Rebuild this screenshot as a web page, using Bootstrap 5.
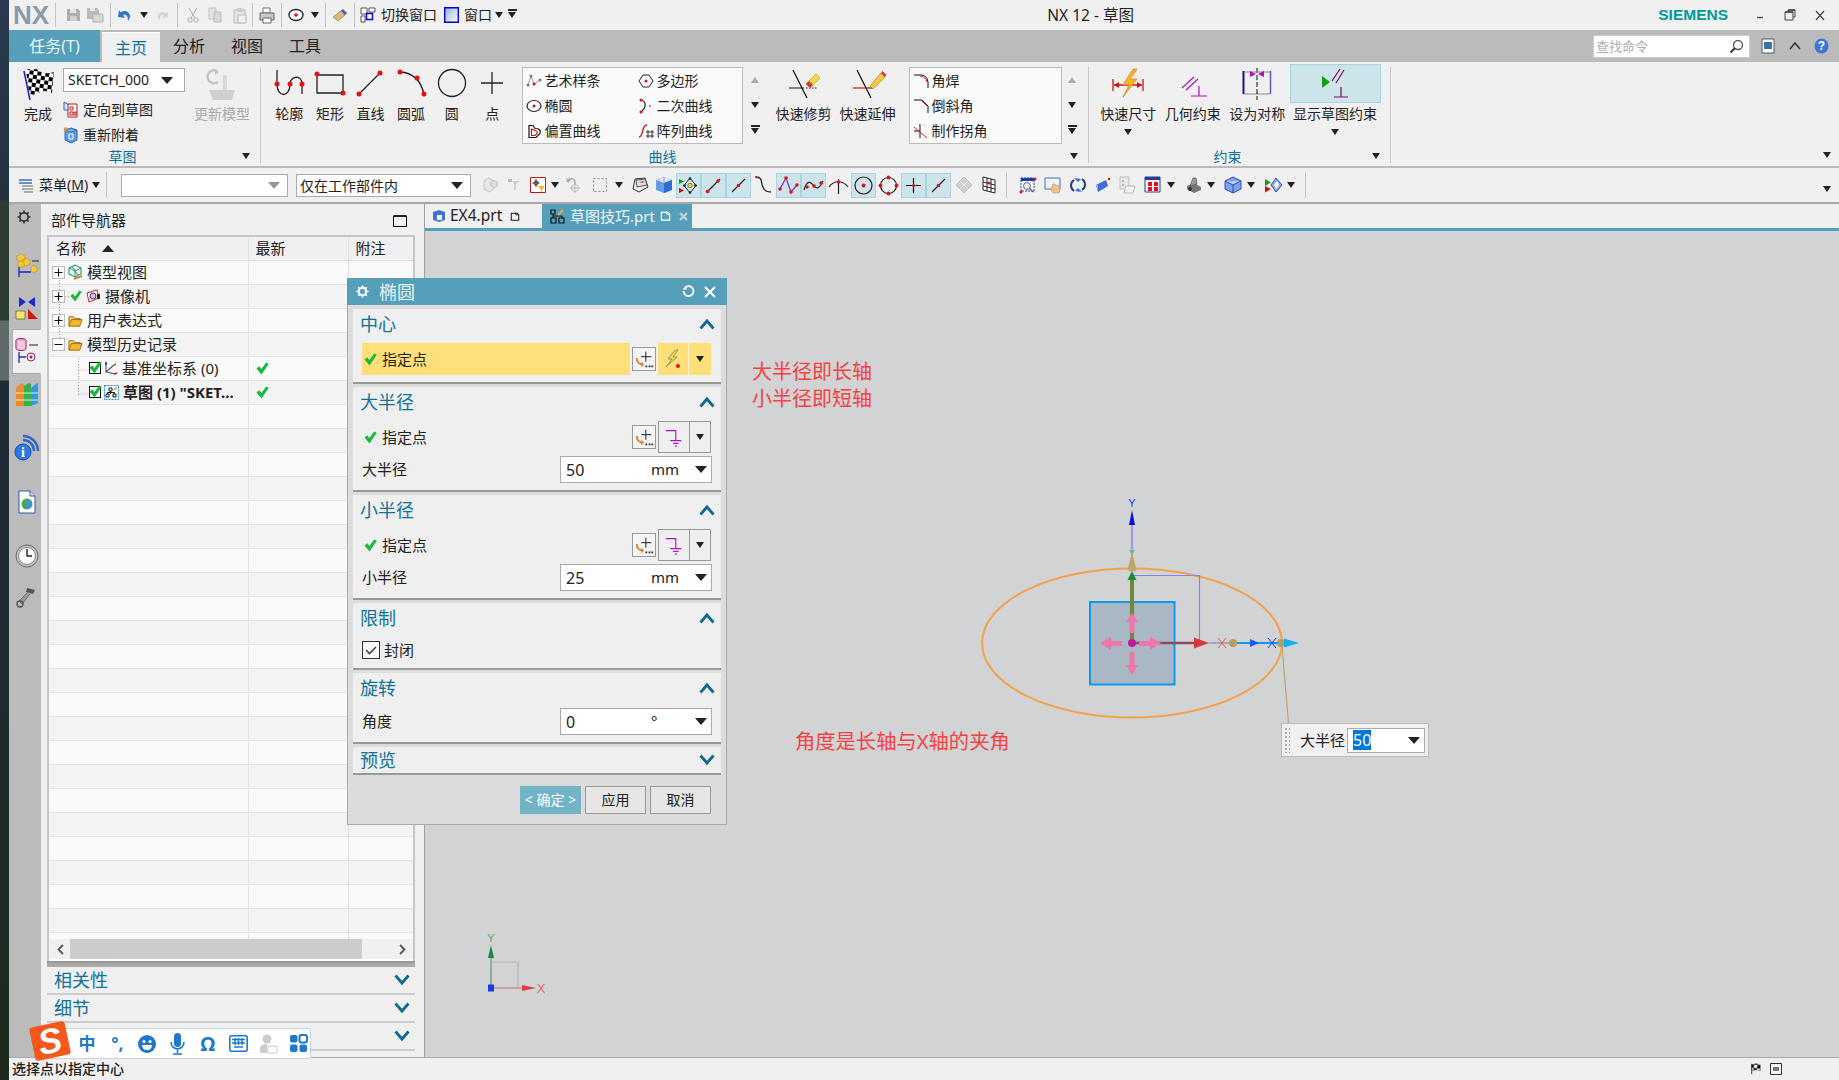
<!DOCTYPE html>
<html lang="zh">
<head>
  <meta charset="UTF-8">
  <title>NX 12 - 草图</title>
  <link href="https://cdn.jsdelivr.net/npm/bootstrap@5.3.0/dist/css/bootstrap.min.css" rel="stylesheet">
  <script src="https://cdn.jsdelivr.net/npm/bootstrap@5.3.0/dist/js/bootstrap.bundle.min.js"></script>
  <style>
    html, body { height: 100%; overflow: hidden; }
    body {
      font-family: "Noto Sans", "Noto Sans CJK SC", sans-serif;
      font-size: 14px; line-height: 1; color: #222;
      background: linear-gradient(#2a3b50 0, #24323f 200px, #2c3d33 201px, #2c3d33 320px, #606a68 321px, #606a68 380px, #1f2b38 381px, #1e2a1e 100%);
    }
    .app { margin-left: 9px; height: 1080px; background: #f0f0f0; }
    svg { display: block; flex: none; overflow: visible; }
    .d { fill: #e3101a; }
    .tri { width: 0; height: 0; border: 4.5px solid transparent; border-top: 6px solid #222; border-bottom: 0; flex: none; }
    .tri.up { border-top: 0; border-bottom: 6px solid #aaa; }
    .tri.lg { border-width: 7px 6px 0; }
    .tri.grey { border-top-color: #999; }
    .tri.bar { position: relative; }
    .tri.bar::before { content: ""; position: absolute; left: -4px; top: -9px; width: 9px; height: 1.5px; background: #222; }
    .m2 { margin-left: 2px; } .m3 { margin-left: 3px; } .m5 { margin-left: 5px; } .m6 { margin-left: 6px; } .m7 { margin-left: 7px; } .m9 { margin-left: 9px; } .m10 { margin-left: 10px; } .m14 { margin-left: 14px; }

    /* title bar */
    .titlebar { height: 30px; }
    .nxlogo { font: bold 26px "Liberation Sans", sans-serif; color: #8b9aa8; width: 36px; margin-left: 4px; }
    .vsep { width: 1px; height: 24px; background: #c4c4c4; flex: none; }
    .q { width: 22px; flex: none; display: flex; justify-content: center; }
    .a { width: 10px; flex: none; display: flex; justify-content: center; }
    .title-t { font-size: 15.5px; padding: 1px 0 0 6px; }
    .siemens { font: bold 15.5px "Liberation Sans", sans-serif; color: #009999; margin-right: 17px; }
    .winbtn { width: 30px; display: flex; justify-content: center; }

    /* tabs */
    .tabbar { height: 32px; background: #bbb; }
    .tabbar .nav-link { padding: 0; border: 0; border-radius: 0; color: #222; font-size: 16px; height: 32px; line-height: 32px; }
    .tabbar .tab-task { width: 91px; background: #559fbb; color: #e8f4f8; text-align: center; margin-right: 2px; }
    .tabbar .tab-home { width: 58px; margin-top: 2px; height: 30px; line-height: 30px; background: #f0f0f0; color: #0f7399; text-align: center; border-top: 1px solid #fff; }
    .tab-o { width: 58px; text-align: center; }
    .search { width: 157px; height: 23px; background: #fff; border: 1px solid #ccc; margin-right: 4px; padding: 0 5px 0 2px; color: #b0b0b0; font-size: 13px; }
    .tabicon { width: 27px; display: flex; justify-content: center; }

    /* ribbon */
    .ribbon { height: 106px; border-bottom: 2px solid #bbb; flex: none; }
    .rgroup { border-right: 1px solid #c8c8c8; margin: 5px 0 3px; }
    .g1 { width: 252px; } .g2 { width: 828px; } .g3 { width: 302px; }
    .rbody { height: 80px; }
    .rfoot { height: 16px; }
    .rlabel { color: #0f7399; text-align: center; line-height: 20px; }
    .launch { width: 24px; display: flex; justify-content: center; align-items: center; padding: 2px 4px 0 0; }
    .rb { display: flex; flex-direction: column; align-items: center; flex: none; }
    .rb-ic { height: 36px; padding-top: 1px; }
    .rb-ic.hl { height: 39px; width: 91px; margin-top: -3px; padding-top: 0; background: #cce4ea; border: 1px solid #a8d4df; display: flex; justify-content: center; align-items: center; }
    .rb-t { height: 22px; line-height: 22px; white-space: nowrap; }
    .rb-caret { height: 9px; }
    .w40 { width: 40.6px; } .w64 { width: 64px; } .w645 { width: 64.5px; } .w91 { width: 91px; }
    .done { width: 36px; margin-left: 11px; }
    .combo { width: 122px; height: 24px; background: #fff; border: 1px solid #aaa; padding: 0 11px 0 4px; }
    .sk-col { margin-left: 7px; width: 122px; padding-top: 1px; }
    .sk-row { height: 25px; gap: 4px; }
    .sk-row.first { margin-top: 5px; }
    .upd { width: 56px; margin-left: 9px; color: #aaa; }
    .gal { background: #fafafa; border: 1px solid #bbb; height: 77px; flex: none; }
    .gal1 { width: 221px; display: grid; grid-template-columns: 112px 1fr; grid-auto-rows: 1fr; }
    .gal2 { width: 153px; display: grid; grid-auto-rows: 1fr; }
    .gi { display: flex; align-items: center; gap: 3px; padding-left: 3px; white-space: nowrap; }
    .scroll { display: flex; flex-direction: column; align-items: center; justify-content: space-around; height: 77px; flex: none; }
    .s24 { width: 24px; } .s20 { width: 20px; }

    /* toolbar */
    .toolbar { height: 36px; border-bottom: 2px solid #a8a8a8; flex: none; }
    .tsep { width: 1px; height: 26px; background: #c4c4c4; flex: none; }
    .tinput { height: 23px; margin-top: 1px; background: #fff; border: 1px solid #aaa; padding: 0 7px 0 3px; flex: none; }
    .ti1 { width: 167px; } .ti2 { width: 175px; }
    .t24 { width: 24px; flex: none; display: flex; justify-content: center; }
    .t25 { width: 25px; flex: none; display: flex; justify-content: center; }
    .t25.on svg { background: #cce4ea; outline: 1px solid #a8d4df; }
    .tdd { width: 40px; flex: none; display: flex; align-items: center; }
    .tdd svg { margin-left: 4px; }
    .tdd .tri { margin-left: 5px; }

    /* main area */
    .main { height: 853px; flex: none; }
    .rail { width: 32px; background: #bbb; flex: none; }
    .rail-i { display: flex; align-items: center; justify-content: center; height: 43px; padding-left: 3px; }
    .rail-i.l { height: 54px; }
    .rail-i.t { height: 40px; }
    .rail-i.ll { height: 56px; margin-top: 5px; }
    .rail-i.s { height: 28px; }
    .rail-i.gear { height: 26px; margin-bottom: 13px; padding-left: 0; padding-right: 2px; }
    .rail-i.act { background: #f0f0f0; margin-left: 3px; padding: 0 0 3px; border: 1px solid #aaa; border-right-color: #f0f0f0; height: 45px; }
    .panel { width: 384px; border-right: 1px solid #a0a0a0; flex: none; padding: 0 9px 6px 6px; }
    .panel-h { height: 31px; padding: 2px 0 0 4px; font-size: 15px; flex: none; }
    .nav-wrap { border: 2px solid #c6c6c6; border-bottom: 0; background: #fff; min-height: 0; position: relative; }
    .nav-scroll { overflow: hidden; min-height: 0; }
    .tree { table-layout: fixed; width: 364px; margin: 0; font-size: 15px; --bs-table-bg: transparent; border-collapse: collapse; }
    .tree .c1 { width: 199px; } .tree .c2 { width: 100px; } .tree .c3 { width: 65px; }
    .tree th, .tree td { padding: 0; height: 24px; border: 0; border-right: 1px solid #e2e2e2; border-bottom: 1px solid #e4e4e4; font-weight: 400; vertical-align: middle; box-shadow: none; color: #222; }
    .tree th { background: #f0f0f0; height: 23px; padding-left: 7px; border-bottom: 1px solid #ddd; }
    .tree tbody tr:nth-child(odd) td { background: #fafafa; }
    .tree tbody tr:nth-child(even) td { background: #f3f3f3; }
    .tn { display: flex; align-items: center; height: 23px; gap: 4px; white-space: nowrap; overflow: hidden; }
    .l0 { padding-left: 4px; } .l1 { padding-left: 40px; gap: 3px; }
    .l1 span:last-child { margin-left: 1px; }
    .col2 { padding-left: 7px; display: flex; align-items: center; height: 23px; }
    .pm { width: 11px; height: 11px; background: #fafafa; outline: 1px solid #bbb; flex: none; }
    .cb { width: 12px; height: 12px; background: #fff; border: 1px solid #111; flex: none; position: relative; }
    .cb svg { position: absolute; left: -1px; top: -2px; }
    .tree-dots { position: absolute; left: 0; top: 0; pointer-events: none; }
    .hscroll { height: 22px; background: #f0f0f0; border-bottom: 2px solid #fff; flex: none; }
    .hs-arrow { width: 22px; display: flex; justify-content: center; align-items: center; }
    .hs-thumb { width: 292px; margin-left: -1px; background: #ccc; height: 20px; }
    .sash { height: 6px; background: #aaa; border-top: 2px solid #999; flex: none; }
    .acc { height: 28px; border-bottom: 2px solid #ccc; padding: 0 5px 0 7px; font-size: 18px; color: #0f7399; flex: none; }

    /* viewport */
    .viewport { min-width: 0; }
    .vtabs { height: 27px; border-bottom: 3px solid #559fbb; padding-left: 3px; flex: none; font-size: 15px; white-space: nowrap; }
    .vtab { height: 24px; display: flex; align-items: center; flex: none; }
    .vtab-b { width: 111px; gap: 4px; padding-left: 4px; font-size: 15.5px; }
    .vtab-a { width: 150px; margin-left: 3px; padding-left: 8px; gap: 5px; background: #559fbb; color: #f0f8fb; }
    .canvas { background: #d2d3d5; min-height: 0; }
    .note { position: absolute; color: #f44242; font-size: 20px; white-space: nowrap; line-height: 1; }
    .note-a { left: 743px; top: 158px; }
    .note-b { left: 743px; top: 185px; }
    .note-c { left: 786px; top: 527px; font-size: 20.3px; }
    .dimbox { position: absolute; left: 1272px; top: 519px; width: 148px; height: 34px; background: #f0f0f0; border: 1px solid #bbb; }
    .grip { width: 6px; height: 26px; margin-left: 2px; background-image: radial-gradient(#aaa 1.2px, transparent 1.3px); background-size: 4px 4px; }
    .dim-l { margin-left: 10px; font-size: 15px; }
    .dim-in { width: 78px; height: 25px; margin-left: 2px; background: #fff; border: 1px solid #aaa; padding: 0 4px 0 5px; font-size: 16px; }
    .dim-in b { background: #0078d7; color: #fff; font-weight: 400; padding: 2px 0; }

    /* dialog */
    .dlg { position: absolute; left: 338px; top: 74px; width: 380px; height: 547px; background: #dcdcdc; border: 1px solid #aaa; border-top: 0; }
    .dlg-h { height: 27px; background: #559fbb; color: #e6f3f7; font-size: 18px; padding: 0 11px 0 9px; margin: 0 -1px 4px; flex: none; }
    .sec { background: #efefef; border-bottom: 2px solid #999; margin: 0 5px 3px; flex: none; }
    .sec-h { height: 32px; padding: 0 6px 3px 7px; color: #0f7399; font-size: 18px; }
    .fs1 { height: 75px; } .fs2 { height: 105px; } .fs4 { height: 67px; } .fs5 { height: 71px; } .fs6 { height: 28px; }
    .row-pick { height: 32px; margin-top: 2px; padding: 0 10px 0 9px; font-size: 15px; }
    .pick-l { width: 269px; height: 32px; padding-left: 2px; gap: 5px; margin-right: 2px; }
    .pick-y { background: #ffdf79; }
    .mini { width: 24px; height: 24px; background: #f4f4f4; border: 1px solid #999; padding: 0; border-radius: 0; flex: none; }
    .split { width: 53px; height: 32px; margin-left: 2px; border: 1px solid #999; flex: none; }
    .split.y { border: 0; background: #ffdf79; }
    .split span { display: flex; align-items: center; justify-content: center; }
    .split .s1 { width: 31px; border-right: 1px solid #999; }
    .split.y .s1 { border-right: 1px solid #fff5cf; }
    .split .s2 { flex: 1; }
    .row-val { height: 27px; padding: 0 9px; font-size: 15px; margin-top: 3px; }
    .val { width: 152px; height: 27px; background: #fff; border: 1px solid #aaa; padding: 0 4px 0 5px; }
    .val .form-control { border: 0; padding: 0; border-radius: 0; font-size: 16px; color: #222; background: transparent; box-shadow: none; min-width: 0; line-height: 1; }
    .val .u { width: 28px; margin-right: 16px; flex: none; font-size: 15px; }
    .chk { height: 30px; padding: 0 9px; gap: 4px; font-size: 15px; }
    .chk-box { width: 18px; height: 18px; background: #f8f8f8; border: 1px solid #333; flex: none; }
    .dlg-f { padding: 8px 15px 0 0; gap: 4px; }
    .dlg-f .btn { width: 61px; height: 28px; padding: 0; border-radius: 0; font-size: 14px; line-height: 1; color: #222; background: #e6e6e6; border: 1px solid #999; }
    .dlg-f .btn-ok { background: #73b3c8; border-color: #73b3c8; color: #fff; }

    /* status */
    .status { height: 23px; border-top: 1px solid #aaa; padding: 0 57px 0 3px; font-weight: 500; flex: none; }

    /* input method bar */
    .ime { position: absolute; left: 44px; top: 1028px; width: 267px; height: 31px; background: #fff; border: 1px solid #c4d4e4; border-radius: 2px; color: #1f78c8; }
    .ime-s { position: absolute; left: 32px; top: 1024px; width: 36px; height: 34px; background: #f4581c; border-radius: 3px; transform: rotate(-12deg); color: #fff; font: italic bold 35px/34px "Liberation Sans", sans-serif; text-align: center; }
    .ime-i { width: 30.2px; display: flex; justify-content: center; align-items: center; font-size: 17px; font-weight: 700; flex: none; }
    .ime-sp { width: 27px; flex: none; }
  </style>
</head>
<body class="position-relative">

<svg width="0" height="0" class="position-absolute">
  <defs>
    <pattern id="chk" width="8" height="8" patternUnits="userSpaceOnUse" patternTransform="rotate(8) translate(1 1)">
      <rect width="8" height="8" fill="#fff"/><rect width="4" height="4"/><rect x="4" y="4" width="4" height="4"/>
    </pattern>
    <linearGradient id="wg" x1="0" y1="0" x2="1" y2="1"><stop offset="0" stop-color="#8fb4dc"/><stop offset="1" stop-color="#fff"/></linearGradient>
    <symbol id="ok" viewBox="0 0 14 14"><path d="M.5 7 3.500 4.500 5.800 7.500 11 .5 13.800 2 6 13.500z" fill="#1cb83c"/></symbol>
    <symbol id="chev-up" viewBox="0 0 16 12"><path d="M1.500 10.500 8 3l6.500 7.500" fill="none" stroke="#0d6b8e" stroke-width="2.800"/></symbol>
    <symbol id="chev-dn" viewBox="0 0 16 12"><path d="M1.500 1.500 8 9l6.500-7.500" fill="none" stroke="#0d6b8e" stroke-width="2.800"/></symbol>
    <symbol id="plus" viewBox="0 0 11 11"><path d="M1.500 5.500h8M5.500 1.500v8" stroke="#111" fill="none"/></symbol>
    <symbol id="minus" viewBox="0 0 11 11"><path d="M1.500 5.500h8" stroke="#111" fill="none"/></symbol>
    <symbol id="pt" viewBox="0 0 24 24"><path d="M14 4v11M9 9.500h11" stroke="#111"/><path d="M4 11c0 5 2 7 7 7" fill="none" stroke="#e57a22" stroke-width="2"/><path d="M9 15l3 3-3 3z" fill="#e57a22"/><path d="M13.500 19h2v2h-2zM17 19h2v2h-2zM20 19h2v2h-2z" fill="#333"/></symbol>
    <symbol id="gnd" viewBox="0 0 22 22"><path d="M2 4h11v11M7 15h12M10 18h6M12 21h2" fill="none" stroke="#b010c0" stroke-width="1.200"/></symbol>
    <symbol id="folder" viewBox="0 0 16 16"><path d="M1 14V4h5l1 2h6v2" fill="#f6d26a" stroke="#a06a10"/><path d="M1 14l2.500-7H15l-2.500 7z" fill="#f4b92c" stroke="#a06a10"/></symbol>
    <symbol id="linedot" viewBox="0 0 23 23"><path d="M5 18 18 5" stroke="#222" stroke-width="1.200"/><circle cx="5.500" cy="17.500" r="1.800" class="d"/><circle cx="16" cy="7" r="1.800" class="d"/></symbol>
    <symbol id="linemid" viewBox="0 0 23 23"><path d="M5 18 18 5" stroke="#222" stroke-width="1.200"/><circle cx="11.500" cy="11.500" r="1.800" class="d"/></symbol>
    <symbol id="pin" viewBox="0 0 12 12"><path d="M1.500 2h7l2 2v6.500h-9z" fill="none" stroke="currentColor" stroke-width="1.300"/><path d="M7 1v3h3" fill="none" stroke="currentColor"/></symbol>
  </defs>
</svg>

<div class="app d-flex flex-column">

  <!-- title bar -->
  <div class="titlebar d-flex align-items-center">
    <span class="nxlogo">NX</span>
    <span class="vsep m6"></span>
    <span class="q m6"><svg width="16" height="16" viewBox="0 0 16 16"><path d="M2 2h11l2 2v10H2z" fill="#aeaeae"/><path d="M5 2h6v4H5z" fill="#e4e4e4"/><path d="M5 9h7v5H5z" fill="#d0d0d0"/></svg></span>
    <span class="q"><svg width="18" height="16" viewBox="0 0 18 16"><path d="M1 1h10l2 2v9H1z" fill="#bbb"/><path d="M4 1h5v3H4z" fill="#e8e8e8"/><path d="M7 7h9l1 1v7H7z" fill="#d8d8d8" stroke="#b0b0b0"/></svg></span>
    <span class="vsep ms-1"></span>
    <span class="q m2"><svg width="16" height="16" viewBox="0 0 16 16"><path d="M3 8c1-5 10-6 11 1 0 2-1 3-2 5 0-4-1-7-5-6L9 11 2 10l1-7 2 3" fill="#2f78c8"/></svg></span>
    <span class="a ms-1"><span class="tri"></span></span>
    <span class="q m3"><svg width="14" height="15" viewBox="0 0 16 16"><path d="M13 8C12 3 3 2 2 9c0 2 1 3 2 5 0-4 1-7 5-6L7 11l7-1-1-7-2 3" fill="#d4d4d4"/></svg></span>
    <span class="vsep m3"></span>
    <span class="q ms-1"><svg width="14" height="16" viewBox="0 0 14 16"><path d="M11 1 5 11M3 1l6 10" stroke="#b0b0b0" fill="none"/><circle cx="4" cy="13" r="2.200" fill="none" stroke="#b0b0b0"/><circle cx="10" cy="13" r="2.200" fill="none" stroke="#b0b0b0"/></svg></span>
    <span class="q"><svg width="14" height="16" viewBox="0 0 14 16"><path d="M1 1h7v11H1z" fill="#e4e4e4" stroke="#c0c0c0"/><path d="M6 5h7v10H6z" fill="#d8d8d8" stroke="#bbb"/></svg></span>
    <span class="q m2"><svg width="15" height="17" viewBox="0 0 15 17"><path d="M2 3h11v13H2z" fill="#e4e4e4" stroke="#bbb"/><path d="M5 1h5v4H5z" fill="#ccc"/><path d="M6 8h8v8H6z" fill="#f0f0f0" stroke="#bbb"/></svg></span>
    <span class="vsep m2"></span>
    <span class="q m3"><svg width="16" height="17" viewBox="0 0 16 17"><path d="M4 1h7v5H4z" fill="#fff" stroke="#777"/><path d="M1 6h14v7H1z" fill="#c8c8c8" stroke="#666"/><path d="M4 11h8v5H4z" fill="#fff" stroke="#666"/></svg></span>
    <span class="vsep m3"></span>
    <span class="q m3"><svg width="16" height="16" viewBox="0 0 16 16"><ellipse cx="8" cy="8" rx="7" ry="5.500" fill="#fff" stroke="#222" stroke-width="1.300"/><circle cx="8" cy="8" r="1.800" class="d"/></svg></span>
    <span class="a m3"><span class="tri"></span></span>
    <span class="vsep m5"></span>
    <span class="q m3"><svg width="16" height="14" viewBox="0 0 16 14"><path d="M1 9 10 2l4 4-8 7z" fill="#d9b77a" stroke="#8a7048" stroke-width=".6"/><path d="M11 1l4 4-2 2-4-4z" fill="#3c62b8"/></svg></span>
    <span class="vsep m3"></span>
    <span class="q m2"><svg width="16" height="16" viewBox="0 0 16 16"><path d="M1 1h6v6H1zM9 1h6v4H9zM1 9h4v6H1z" fill="#fff" stroke="#555"/><path d="M6.500 6.500h6v6h-6z" fill="#fff" stroke="#00c" stroke-width="1.400"/></svg></span>
    <span class="m2">切换窗口</span>
    <span class="q m3"><svg width="15" height="16" viewBox="0 0 15 16"><path d="M.7.700h13.600v14.600H.7z" fill="url(#wg)" stroke="#00c" stroke-width="1.400"/></svg></span>
    <span class="m2">窗口</span>
    <span class="a m2"><span class="tri"></span></span>
    <span class="a m3"><span class="tri bar"></span></span>
    <span class="flex-fill text-center title-t">NX 12 - 草图</span>
    <span class="siemens">SIEMENS</span>
    <span class="winbtn"><svg width="8" height="8" viewBox="0 0 8 8"><path d="M1 6.500h6" stroke="#444" stroke-width="1.400"/></svg></span>
    <span class="winbtn"><svg width="12" height="12" viewBox="0 0 12 12"><path d="M4 3V1h7v7H9M1 3h8v8H1z" fill="none" stroke="#444"/><path d="M1 3h8M4 1h7" stroke="#444" stroke-width="1.500"/></svg></span>
    <span class="winbtn me-1"><svg width="10" height="11" viewBox="0 0 10 11"><path d="m1 1 8 9M9 1l-8 9" stroke="#444" stroke-width="1.200"/></svg></span>
  </div>

  <!-- tabs -->
  <ul class="nav tabbar align-items-start flex-nowrap">
    <li class="nav-item"><a class="nav-link tab-task" href="#">任务(T)</a></li>
    <li class="nav-item"><a class="nav-link tab-home" href="#">主页</a></li>
    <li class="nav-item"><a class="nav-link tab-o" href="#">分析</a></li>
    <li class="nav-item"><a class="nav-link tab-o" href="#">视图</a></li>
    <li class="nav-item"><a class="nav-link tab-o" href="#">工具</a></li>
    <li class="nav-item ms-auto d-flex align-items-center h-100">
      <div class="search d-flex align-items-center justify-content-between">
        <span>查找命令</span>
        <svg width="15" height="15" viewBox="0 0 15 15"><circle cx="9" cy="6" r="4.500" fill="#fff" stroke="#555" stroke-width="1.300"/><path d="M6 9 1.500 13.500" stroke="#333" stroke-width="2"/></svg>
      </div>
      <span class="tabicon"><svg width="14" height="16" viewBox="0 0 14 16"><path d="M1 1h12v14H1z" fill="#fff" stroke="#555"/><path d="M3 4h8v7H3z" fill="#3f6fa8"/></svg></span>
      <span class="tabicon"><svg width="12" height="10" viewBox="0 0 12 10"><path d="M1 8 6 2l5 6" fill="none" stroke="#333" stroke-width="1.500"/></svg></span>
      <span class="tabicon me-1"><svg width="15" height="16" viewBox="0 0 15 16"><ellipse cx="7.500" cy="8" rx="7" ry="7.500" fill="#3f74d6"/><text x="7.500" y="12" text-anchor="middle" font-family="Liberation Sans" font-weight="700" font-size="12" fill="#fff">?</text></svg></span>
    </li>
  </ul>

  <!-- ribbon -->
  <div class="ribbon d-flex">
    <div class="rgroup g1 d-flex flex-column">
      <div class="rbody d-flex">
        <div class="rb done">
          <div class="rb-ic"><svg width="34" height="34" viewBox="0 0 34 34"><path d="M5 2 Q13 -1 19 3 T33 4 L31 25 Q24 21 17 25 T8 24 Z" fill="url(#chk)"/><path d="M3 3 9 32" stroke="#1c1cc8" stroke-width="1.500"/></svg></div>
          <div class="rb-t">完成</div>
        </div>
        <div class="sk-col">
          <div class="combo d-flex align-items-center justify-content-between"><span>SKETCH_000</span><span class="tri lg"></span></div>
          <div class="sk-row first d-flex align-items-center">
            <svg width="16" height="17" viewBox="0 0 16 17"><path d="M1 1 6 4v5H1z" fill="#dfe6f8" stroke="#3c5cc0"/><path d="M5 3h9v13H5z" fill="#fff" stroke="#a02020"/><path d="M7 6h3v3H7zM7 11h3v3H7zM11 11h2v3h-2z" fill="none" stroke="#c01818"/></svg>
            <span>定向到草图</span>
          </div>
          <div class="sk-row d-flex align-items-center">
            <svg width="16" height="17" viewBox="0 0 16 17"><path d="M2 4 8 2l6 2v10l-6 3-6-3z" fill="#5a9ade" stroke="#2f6cb0"/><path d="M2 4l6 2 6-2" fill="#a8ccf0" stroke="#2f6cb0"/><path d="M6 8h4v5H6z" fill="none" stroke="#fff"/><circle cx="2.500" cy="3" r="1.800" fill="#e8922c"/></svg>
            <span>重新附着</span>
          </div>
        </div>
        <div class="rb upd">
          <div class="rb-ic"><svg width="32" height="34" viewBox="0 0 32 34"><path d="M11 3a6.500 6.500 0 1 0 1 11" fill="none" stroke="#c4c4c4" stroke-width="2.500"/><path d="M9 1l4 3-4 3z" fill="#c4c4c4"/><path d="M14 7h7v15h-7z" fill="#d8d8d8"/><path d="M3 22h26l-3 10H7z" fill="#d0d0d0"/><path d="M14 7h3v15h-3z" fill="#eee"/></svg></div>
          <div class="rb-t">更新模型</div>
        </div>
      </div>
      <div class="rfoot d-flex"><div class="rlabel flex-fill">草图</div><div class="launch"><span class="tri"></span></div></div>
    </div>

    <div class="rgroup g2 d-flex flex-column">
      <div class="rbody d-flex ps-2">
        <div class="rb w40"><div class="rb-ic"><svg width="40" height="34" viewBox="0 0 40 34"><path d="M8 2v14c0 14 13 14 13 0 0-8 12-10 12 0v10" fill="none" stroke="#222" stroke-width="1.300"/><circle cx="8" cy="16" r="2.500" class="d"/><circle cx="21" cy="16" r="2.500" class="d"/><circle cx="33" cy="16" r="2.500" class="d"/></svg></div><div class="rb-t">轮廓</div></div>
        <div class="rb w40"><div class="rb-ic"><svg width="40" height="34" viewBox="0 0 40 34"><path d="M7 7h26v18H7z" fill="none" stroke="#222" stroke-width="1.300"/><circle cx="7" cy="6" r="2.500" class="d"/><circle cx="33" cy="25" r="2.500" class="d"/></svg></div><div class="rb-t">矩形</div></div>
        <div class="rb w40"><div class="rb-ic"><svg width="40" height="34" viewBox="0 0 40 34"><path d="M9 26 30 5" stroke="#222" stroke-width="1.300"/><circle cx="9" cy="26" r="2.500" class="d"/><circle cx="30" cy="5" r="2.500" class="d"/></svg></div><div class="rb-t">直线</div></div>
        <div class="rb w40"><div class="rb-ic"><svg width="40" height="34" viewBox="0 0 40 34"><path d="M9 4Q28 5 33 26" fill="none" stroke="#222" stroke-width="1.300"/><circle cx="9" cy="4" r="2.500" class="d"/><circle cx="26" cy="10" r="2.500" class="d"/><circle cx="33" cy="26" r="2.500" class="d"/></svg></div><div class="rb-t">圆弧</div></div>
        <div class="rb w40"><div class="rb-ic"><svg width="40" height="34" viewBox="0 0 40 34"><circle cx="20" cy="15" r="13.500" fill="none" stroke="#222" stroke-width="1.300"/></svg></div><div class="rb-t">圆</div></div>
        <div class="rb w40"><div class="rb-ic"><svg width="40" height="34" viewBox="0 0 40 34"><path d="M9 15h22M20 4v22" stroke="#222" stroke-width="1.300"/></svg></div><div class="rb-t">点</div></div>
        <div class="gal gal1 m9">
          <div class="gi"><svg width="16" height="16" viewBox="0 0 16 16"><path d="M2 12 5 3l3 8 6-4" fill="none" stroke="#999"/><circle cx="2" cy="12" r="1.500" fill="#777"/><circle cx="5" cy="3" r="1.500" fill="#777"/><circle cx="8" cy="11" r="1.500" class="d"/><circle cx="14" cy="7" r="1.500" fill="#777"/></svg>艺术样条</div>
          <div class="gi"><svg width="16" height="16" viewBox="0 0 16 16"><path d="M5 2h6l4 6-4 6H5L1 8z" fill="#fff" stroke="#222"/><circle cx="8" cy="8" r="1.500" class="d"/></svg>多边形</div>
          <div class="gi"><svg width="16" height="16" viewBox="0 0 16 16"><ellipse cx="8" cy="8" rx="7" ry="5.500" fill="#fff" stroke="#222" stroke-width="1.200"/><circle cx="8" cy="8" r="1.500" class="d"/></svg>椭圆</div>
          <div class="gi"><svg width="16" height="16" viewBox="0 0 16 16"><path d="M3 2C8 3 9 9 3 14" fill="none" stroke="#222" stroke-width="1.200"/><circle cx="3" cy="2" r="1.500" class="d"/><circle cx="3" cy="14" r="1.500" class="d"/><circle cx="12" cy="8" r="1" fill="#777"/></svg>二次曲线</div>
          <div class="gi"><svg width="16" height="16" viewBox="0 0 16 16"><path d="M3 2.500h4l2 3c4 0 6 1 5 5l-4 4H3z" fill="#fff" stroke="#111" stroke-width="1.200"/><path d="M5.500 6c2 0 3 2 5 2 1 0 1 2 0 3l-1.500 1.500H5.500z" fill="none" stroke="#d01010" stroke-width="1.200"/></svg>偏置曲线</div>
          <div class="gi"><svg width="16" height="16" viewBox="0 0 16 16"><path d="M1 14c5 0 2-12 8-12" fill="none" stroke="#d01010" stroke-width="1.300"/><path d="M9 8h2v2H9zM13 8h2v2h-2zM9 12h2v2H9zM13 12h2v2h-2z" fill="none" stroke="#333"/></svg>阵列曲线</div>
        </div>
        <div class="scroll s24"><span class="tri up"></span><span class="tri"></span><span class="tri bar"></span></div>
        <div class="rb w64 m5"><div class="rb-ic"><svg width="64" height="34" viewBox="0 0 64 34"><path d="M21 2 35 30M17 20h15" stroke="#111" stroke-width="1.200"/><path d="M34 20h12" stroke="#111" stroke-dasharray="1.500 1.500"/><path d="M34 16 44 6l4 4-10 10z" fill="#f5d73e" stroke="#b89020" stroke-width=".6"/><path d="M34 16l4 4 3-3-4-4z" fill="#d23a2a"/></svg></div><div class="rb-t">快速修剪</div></div>
        <div class="rb w64"><div class="rb-ic"><svg width="64" height="34" viewBox="0 0 64 34"><path d="M21 2 35 30" stroke="#111" stroke-width="1.200"/><path d="M17 20h14" stroke="#d01010" stroke-width="1.200"/><path d="M31 20h5" stroke="#111"/><path d="M34 18 45 5l4 4-12 12z" fill="#f5c83e" stroke="#a87818" stroke-width=".6"/><path d="M45 5l4 4 1.500-2-4-4z" fill="#d23a2a"/></svg></div><div class="rb-t">快速延伸</div></div>
        <div class="gal gal2 m9">
          <div class="gi"><svg width="16" height="16" viewBox="0 0 16 16"><path d="M1 2h7q6 0 7 7v6" fill="none" stroke="#111"/><path d="M7 3q6 1 7 6" fill="none" stroke="#e02020"/></svg>角焊</div>
          <div class="gi"><svg width="16" height="16" viewBox="0 0 16 16"><path d="M1 2h8l6 6v7" fill="none" stroke="#111"/><path d="M8 2l6 6" stroke="#e02020"/></svg>倒斜角</div>
          <div class="gi"><svg width="16" height="16" viewBox="0 0 16 16"><path d="M7 1v14M1 8h6" stroke="#111"/><path d="M1 4l13 11" stroke="#e02020"/><path d="M7 2h5M12 8h2" stroke="#bbb" stroke-dasharray="1 1"/></svg>制作拐角</div>
        </div>
        <div class="scroll s20"><span class="tri up"></span><span class="tri"></span><span class="tri bar"></span></div>
      </div>
      <div class="rfoot d-flex"><div class="rlabel flex-fill">曲线</div><div class="launch"><span class="tri"></span></div></div>
    </div>

    <div class="rgroup g3 d-flex flex-column">
      <div class="rbody d-flex m7">
        <div class="rb w645"><div class="rb-ic"><svg width="64" height="34" viewBox="0 0 64 34"><path d="M17 11v12M47 11v12M18 17h28" stroke="#d01010" stroke-width="1.300" fill="none"/><path d="M18 17l5-3v6zM46 17l-5-3v6z" fill="#d01010"/><path d="M37 1 27 17h6l-6 12 14-18h-7l7-10z" fill="#f5b62a" stroke="#e07818" stroke-width=".7"/></svg></div><div class="rb-t">快速尺寸</div><div class="rb-caret"><span class="tri d-block mt-1"></span></div></div>
        <div class="rb w645"><div class="rb-ic"><svg width="64" height="34" viewBox="0 0 64 34"><path d="M21 20 33 9M25 22 37 11M30 28h16M38 18v10" stroke="#b010c0" stroke-width="1.200" fill="none"/></svg></div><div class="rb-t">几何约束</div></div>
        <div class="rb w645"><div class="rb-ic"><svg width="64" height="34" viewBox="0 0 64 34"><path d="M18.500 3v23" stroke="#14148a" stroke-width="2"/><path d="M45.500 3v23" stroke="#5a5ab0" stroke-width="1.500"/><path d="M19 26h26" stroke="#888"/><path d="M32 0v32" stroke="#111" stroke-dasharray="5 2"/><path d="M19 4h26" stroke="#888"/><path d="M31 6l-6-3v6zM33 6l6-3v6z" fill="#b010c0"/></svg></div><div class="rb-t">设为对称</div></div>
        <div class="rb w91"><div class="rb-ic hl"><svg width="40" height="34" viewBox="0 0 40 34"><path d="M7 9l8 6-8 6z" fill="#12a012"/><path d="M17 14 25 2M21 16 29 3M19 30h14M26 20v10" stroke="#7a0a5a" stroke-width="1.200" fill="none"/></svg></div><div class="rb-t">显示草图约束</div><div class="rb-caret"><span class="tri d-block mt-1"></span></div></div>
      </div>
      <div class="rfoot d-flex"><div class="rlabel flex-fill">约束</div><div class="launch"><span class="tri"></span></div></div>
    </div>
    <div class="flex-fill d-flex align-items-end justify-content-end pe-2 pb-2"><span class="tri"></span></div>
  </div>

  <!-- selection toolbar -->
  <div class="toolbar d-flex align-items-center">
    <span class="q m6"><svg width="16" height="16" viewBox="0 0 16 16"><path d="M1 3h13M1 6h13" stroke="#3f6fb0" stroke-width="1.400"/><path d="M4 9h11M4 12h11M6 15h9" stroke="#666"/></svg></span>
    <span class="m2">菜单(<u>M</u>)</span>
    <span class="a m3"><span class="tri"></span></span>
    <span class="tsep m5"></span>
    <div class="tinput ti1 m14 d-flex align-items-center justify-content-end"><span class="tri lg grey"></span></div>
    <div class="tinput ti2 ms-2 d-flex align-items-center justify-content-between"><span>仅在工作部件内</span><span class="tri lg"></span></div>
    <span class="t24 m7"><svg width="18" height="18" viewBox="0 0 18 18"><path d="M3 5l5-3 5 3v8l-5 3-5-3z" fill="#e6e6e6" stroke="#c4c4c4"/><circle cx="13" cy="8" r="3.500" fill="#ddd" stroke="#c4c4c4"/></svg></span>
    <span class="t24"><svg width="18" height="18" viewBox="0 0 18 18"><path d="M2 5h5l2 3v6h2V8l4-3z" fill="#d0d0d0"/><path d="M3 3h4v3H3z" fill="#bbb"/></svg></span>
    <span class="t24"><svg width="16" height="16" viewBox="0 0 16 16"><path d="M.5.500h15v15H.5z" fill="#fff" stroke="#c01818"/><path d="M6 2v8M2.500 6h7" stroke="#333"/><circle cx="6" cy="6" r="2" fill="none" stroke="#333"/><path d="M8 9h7l-3 4v2h-1v-2z" fill="#f5b62a"/></svg></span>
    <span class="a"><span class="tri"></span></span>
    <span class="t24 m2"><svg width="18" height="18" viewBox="0 0 18 18"><path d="M2 6c2-5 8-4 8 0v3" fill="none" stroke="#aaa" stroke-width="1.500"/><path d="M1 2l2 5 3-3z" fill="#aaa"/><circle cx="10" cy="12" r="3.500" fill="none" stroke="#bbb"/><path d="M10 7v10M5 12h10" stroke="#bbb"/></svg></span>
    <span class="t24 m2"><svg width="18" height="18" viewBox="0 0 18 18"><path d="M2.500 2.500h13v13h-13z" fill="none" stroke="#888" stroke-dasharray="2 2"/></svg></span>
    <span class="a m2"><span class="tri"></span></span>
    <span class="t24 ms-1"><svg width="18" height="16" viewBox="0 0 18 16"><path d="M4 2 14 1l3 9-9 5-6-3z" fill="#f0f0f0" stroke="#333"/><path d="M5 3l9-1 2 6-10 2z" fill="#dcdcdc" stroke="#555"/><path d="M8 5l5-1-1 2z" fill="#d04040"/></svg></span>
    <span class="t24"><svg width="18" height="18" viewBox="0 0 18 18"><path d="M1 4l8-3 8 3v10l-8 3-8-3z" fill="#5aa0ec"/><path d="M1 4l8 3 8-3-8-3z" fill="#d6e8fa"/><path d="M9 7v10l8-3V4z" fill="#2f6cd6"/><path d="M4 3v8M9 1v7" stroke="#e05050" stroke-width=".6"/></svg></span>
    <span class="t25 on"><svg width="23" height="23" viewBox="0 0 23 23"><path d="M2 5l5 2.500L2 10z" fill="#12a012"/><path d="M2 14l5 2.500L2 19z" fill="#d01010"/><path d="M13 4l6 7.500-6 7.500-6-7.500z" fill="none" stroke="#222"/><circle cx="13" cy="11.500" r="2.200" fill="#f5d73e" stroke="#222" stroke-width=".5"/><circle cx="13" cy="4.500" r="1.300" fill="#222"/><circle cx="13" cy="18.500" r="1.300" fill="#222"/><circle cx="7.500" cy="11.500" r="1.300" fill="#222"/><circle cx="18.500" cy="11.500" r="1.300" fill="#222"/></svg></span>
    <span class="t25 on"><svg width="23" height="23"><use href="#linedot"/></svg></span>
    <span class="t25 on"><svg width="23" height="23"><use href="#linemid"/></svg></span>
    <span class="t25"><svg width="23" height="23" viewBox="0 0 23 23"><path d="M4 3c8 0 4 8 8 12 2 3 5 3 7 3" fill="none" stroke="#222" stroke-width="1.300"/><circle cx="4" cy="3" r="1" class="d"/></svg></span>
    <span class="t25 on"><svg width="23" height="23" viewBox="0 0 23 23"><path d="M3 15 9 4l5 14 6-7" fill="none" stroke="#7a30c8" stroke-width="1.200"/><circle cx="3" cy="15" r="1.800" class="d"/><circle cx="9" cy="4" r="1.800" class="d"/><circle cx="14" cy="18" r="1.800" class="d"/><circle cx="20" cy="11" r="1.800" class="d"/></svg></span>
    <span class="t25 on"><svg width="23" height="23" viewBox="0 0 23 23"><path d="M2 16C5 5 9 8 12 12s7 1 9-5" fill="none" stroke="#222" stroke-width="1.200"/><circle cx="5" cy="13" r="1.800" class="d"/><circle cx="12" cy="12" r="1.800" class="d"/><circle cx="19" cy="9" r="1.800" class="d"/></svg></span>
    <span class="t25"><svg width="23" height="23" viewBox="0 0 23 23"><path d="M2 13c5-7 14-7 19 0M11.500 5v15" fill="none" stroke="#222" stroke-width="1.200"/><circle cx="11.500" cy="8" r="1.800" class="d"/></svg></span>
    <span class="t25 on"><svg width="23" height="23" viewBox="0 0 23 23"><circle cx="11.500" cy="11.500" r="8.500" fill="none" stroke="#222" stroke-width="1.200"/><circle cx="11.500" cy="11.500" r="2" class="d"/></svg></span>
    <span class="t25"><svg width="23" height="23" viewBox="0 0 23 23"><circle cx="11.500" cy="11.500" r="8" fill="none" stroke="#222" stroke-width="1.200"/><circle cx="11.500" cy="3.500" r="1.900" class="d"/><circle cx="11.500" cy="19.500" r="1.900" class="d"/><circle cx="3.500" cy="11.500" r="1.900" class="d"/><circle cx="19.500" cy="11.500" r="1.900" class="d"/></svg></span>
    <span class="t25 on"><svg width="23" height="23" viewBox="0 0 23 23"><path d="M4 11.500h15M11.500 4v15" stroke="#111" stroke-width="1.200"/><circle cx="11.500" cy="11.500" r="1.500" class="d"/></svg></span>
    <span class="t25 on"><svg width="23" height="23"><use href="#linemid"/></svg></span>
    <span class="t25"><svg width="20" height="20" viewBox="0 0 20 20"><path d="M10 2l8 8-8 8-8-8z" fill="#d0d0d0" stroke="#bbb"/><path d="M6 6l8 8M14 6l-8 8" stroke="#eee"/></svg></span>
    <span class="t25"><svg width="16" height="18" viewBox="0 0 16 18"><path d="M2 1l12 3v13L2 14z" fill="#fff" stroke="#222"/><path d="M6 2v13M10 3v13M2 6l12 3M2 10l12 3" stroke="#222"/><circle cx="8" cy="7" r="1.500" class="d"/></svg></span>
    <span class="tsep m5"></span>
    <span class="t25 ms-2"><svg width="18" height="18" viewBox="0 0 18 18"><path d="M2 2h13v13H2z" fill="#fff" stroke="#1a3ab0" stroke-dasharray="2 1"/><path d="M2 2h13v3H2z" fill="#1a3ab0"/><circle cx="8" cy="10" r="3.500" fill="#e8f0fa" stroke="#666"/><path d="M10.500 12.500l4 3.500" stroke="#666" stroke-width="1.500"/><circle cx="2" cy="16" r="1.500" class="d"/><circle cx="16" cy="3" r="1.500" class="d"/></svg></span>
    <span class="t25"><svg width="18" height="18" viewBox="0 0 18 18"><path d="M1 2h15v11H1z" fill="#eef3fb" stroke="#4a6ab0"/><path d="M9 8h2l1 1 3 1 1 3-1 4H9L6 12h2z" fill="#eec28a" stroke="#b98850" stroke-width=".5"/></svg></span>
    <span class="t25"><svg width="18" height="18" viewBox="0 0 18 18"><path d="M5 4c-4 3-4 8 0 11" fill="none" stroke="#2a3a80" stroke-width="2"/><path d="M13 14c4-3 4-8 0-11" fill="none" stroke="#2a3a80" stroke-width="2"/><path d="M5 2l7 1-3 3zM13 16l-7-1 3-3z" fill="#2f6cd6"/></svg></span>
    <span class="t25"><svg width="18" height="18" viewBox="0 0 18 18"><path d="M2 9l10-5 2 6-10 6z" fill="#3f6fd6"/><path d="M2 9l2 7V9z" fill="#8ab0ec"/><circle cx="15" cy="3" r="1.300" class="d"/></svg></span>
    <span class="t25"><svg width="18" height="18" viewBox="0 0 18 18"><path d="M1 1h9v12H1z" fill="#e8e8e8" stroke="#c0c0c0"/><path d="M3 4h2v2H3zM3 8h2v2H3z" fill="#bbb"/><path d="M7 10h9l-2 7H5z" fill="#f0f0f0" stroke="#bbb"/></svg></span>
    <span class="tdd"><svg width="18" height="18" viewBox="0 0 18 18"><path d="M1 1h15v15H1z" fill="#f2f5fb" stroke="#2a3a90"/><path d="M1 1h15v3H1z" fill="#2a3a90"/><path d="M4 6h4v4H4zM10 6h4v4h-4zM4 11h4v4H4zM10 11h4v4h-4z" class="d"/></svg><span class="tri"></span></span>
    <span class="tdd"><svg width="18" height="18" viewBox="0 0 18 18"><path d="M3 10l7-3 7 4v3l-7 3-7-4z" fill="#777"/><path d="M6 10 9 2h3l1 6z" fill="#9a9a9a" stroke="#444" stroke-width=".6"/><circle cx="6" cy="13" r="2" fill="#333"/></svg><span class="tri"></span></span>
    <span class="tdd"><svg width="18" height="18" viewBox="0 0 18 18"><path d="M1 5l8-4 8 4v8l-8 4-8-4z" fill="#7ea2ee" stroke="#2f4fb0"/><path d="M1 5l8 4 8-4" fill="#b4ccf6" stroke="#2f4fb0"/><path d="M9 9v8" stroke="#2f4fb0"/></svg><span class="tri"></span></span>
    <span class="tdd"><svg width="18" height="18" viewBox="0 0 18 18"><path d="M1 3l6 3.500L1 10z" fill="#12a012"/><path d="M1 10l6 3-6 3.500z" fill="#d01010"/><path d="M12 2l6 7-6 7-5-7z" fill="#8eaee8" stroke="#2f4fb0"/><path d="M10 9l3-4 2 4-3 4z" fill="#fff"/></svg><span class="tri"></span></span>
    <span class="tsep m5"></span>
    <span class="tri ms-auto me-2 mt-2"></span>
  </div>

  <!-- main -->
  <div class="main d-flex position-relative">
    <div class="rail d-flex flex-column">
      <div class="rail-i gear"><svg width="14" height="14" viewBox="0 0 14 14"><circle cx="7" cy="7" r="4.200" fill="none" stroke="#333" stroke-width="1.800"/><path d="M7 .5v2M7 11.500v2M.5 7h2M11.500 7h2M2.400 2.400l1.400 1.400M10.200 10.200l1.400 1.400M11.600 2.400l-1.400 1.400M3.800 10.200l-1.400 1.400" stroke="#333" stroke-width="1.600"/></svg></div>
      <div class="rail-i"><svg width="24" height="24" viewBox="0 0 24 24"><path d="M2 3l4-2 4 2v4l-4 2-4-2zM7 7l4-2 4 2v4l-4 2-4-2z" fill="#f3c940" stroke="#c08a14" stroke-width=".6"/><path d="M3 9l3-1 3 1v5H3z" fill="#f3c940" stroke="#c08a14" stroke-width=".6"/><path d="M16 14l3-2 3 2v4l-3 2-3-2z" fill="#f3c940" stroke="#c08a14" stroke-width=".6"/><path d="M4 14v10M4 19h12" stroke="#1a2ab8" stroke-width="1.300"/><path d="M17 8h7" stroke="#222"/></svg></div>
      <div class="rail-i"><svg width="24" height="24" viewBox="0 0 24 24"><path d="M4 1l7 5-7 5zM20 1l-7 5 7 5z" fill="#1a2ad0"/><path d="M1 15h9v8H1z" fill="#f6e860" stroke="#555" stroke-width=".7"/><path d="M13 23V13l10 10z" fill="#d01818"/></svg></div>
      <div class="rail-i act"><svg width="24" height="26" viewBox="0 0 24 26"><ellipse cx="6" cy="3.500" rx="5" ry="2" fill="#e6a2c8" stroke="#a0186a"/><path d="M1 3.500v8c0 1 2 2 5 2s5-1 5-2v-8" fill="#f2c8de" stroke="#a0186a"/><path d="M4 15v11M4 20h7" stroke="#1a2ab8" stroke-width="1.300"/><circle cx="16" cy="20" r="4" fill="none" stroke="#a0186a"/><circle cx="16" cy="20" r="1.500" fill="#a0186a"/><path d="M14 8h9" stroke="#222"/></svg></div>
      <div class="rail-i t"><svg width="24" height="24" viewBox="0 0 24 24"><path d="M1 6l5-5 3 1v22H1z" fill="#ee8a2a"/><path d="M9 4l5-3 2 1v22H9z" fill="#37b24a"/><path d="M16 6l6-5 1 1v19l-7 3z" fill="#2f9ade"/><path d="M1 11h8M1 18h8M9 11h7M9 18h7M16 11h7M16 18h7" stroke="#fff" stroke-width=".8"/></svg></div>
      <div class="rail-i ll"><svg width="25" height="25" viewBox="0 0 25 25"><path d="M9 1a15 15 0 0 1 15 15M9 5a11 11 0 0 1 11 11" fill="none" stroke="#2f64c8" stroke-width="2.400"/><circle cx="9" cy="17" r="8" fill="#2f78e0" stroke="#1a4aa8"/><text x="9" y="22" text-anchor="middle" font-family="Liberation Serif" font-weight="700" font-size="14" fill="#fff">i</text></svg></div>
      <div class="rail-i l"><svg width="20" height="24" viewBox="0 0 20 24"><path d="M2 1h11l5 5v17H2z" fill="#fff" stroke="#2a5ab0"/><path d="M13 1v5h5" fill="#d8e4f8" stroke="#2a5ab0"/><circle cx="10" cy="14" r="5.500" fill="#3fae4a"/><path d="M6 11c3 0 4 3 2 6l3 2c3-2 4-5 2-8z" fill="#4a90e0"/></svg></div>
      <div class="rail-i l"><svg width="24" height="24" viewBox="0 0 24 24"><circle cx="12" cy="12" r="11" fill="#c8c8c8" stroke="#666"/><circle cx="12" cy="12" r="8.500" fill="#f6f8fc" stroke="#888"/><path d="M12 5v7h5" fill="none" stroke="#222" stroke-width="1.400"/></svg></div>
      <div class="rail-i s"><svg width="22" height="22" viewBox="0 0 22 22"><path d="M11 2l8 2-2 4-7-2z" fill="#555"/><path d="M12 6 3 15l3 3 8-10" fill="#9a9a9a" stroke="#444" stroke-width=".6"/><circle cx="4" cy="18" r="3" fill="none" stroke="#555" stroke-width="1.400"/></svg></div>
    </div>

    <div class="panel d-flex flex-column">
      <div class="panel-h d-flex align-items-center justify-content-between">
        <span>部件导航器</span>
        <svg class="me-2" width="14" height="12" viewBox="0 0 14 12"><path d="M.5 1h13v10.500H.5z" fill="none" stroke="#111"/><path d="M.5 1h13" stroke="#111" stroke-width="1.600"/></svg>
      </div>
      <div class="nav-wrap flex-fill d-flex flex-column">
        <div class="nav-scroll flex-fill">
          <table class="table tree">
            <colgroup><col class="c1"><col class="c2"><col class="c3"></colgroup>
            <thead>
              <tr><th><span class="d-flex align-items-center">名称<svg class="ms-3" width="12" height="7" viewBox="0 0 12 7"><path d="M6 0l6 7H0z" fill="#222"/></svg></span></th><th>最新</th><th>附注</th></tr>
            </thead>
            <tbody id="rows">
              <tr><td><div class="tn l0"><span class="pm"><svg width="11" height="11"><use href="#plus"/></svg></span><svg width="15" height="16" viewBox="0 0 15 16"><path d="M7 1l6 3v6l-6 3-6-3V4z" fill="none" stroke="#1a9a5a" stroke-width="1.100"/><path d="M1 4l6 3 6-3M7 7v6M4 2.500 10 11" stroke="#1a9a5a" fill="none"/><path d="M6 15l8-3" stroke="#e25a20" stroke-width="1.500"/></svg><span>模型视图</span></div></td><td></td><td></td></tr>
              <tr><td><div class="tn l0"><span class="pm"><svg width="11" height="11"><use href="#plus"/></svg></span><svg class="m2" width="12" height="12"><use href="#ok"/></svg><svg width="15" height="14" viewBox="0 0 15 14"><path d="M1 4l10-3 2 8L3 13z" fill="#fff" stroke="#d01818"/><circle cx="7" cy="7" r="3" fill="#e8c0c0" stroke="#1a2ab8"/><path d="M11 5h3v5h-3z" fill="#222"/></svg><span>摄像机</span></div></td><td></td><td></td></tr>
              <tr><td><div class="tn l0"><span class="pm"><svg width="11" height="11"><use href="#plus"/></svg></span><svg width="15" height="15"><use href="#folder"/></svg><span>用户表达式</span></div></td><td></td><td></td></tr>
              <tr><td><div class="tn l0"><span class="pm"><svg width="11" height="11"><use href="#minus"/></svg></span><svg width="15" height="15"><use href="#folder"/></svg><span>模型历史记录</span></div></td><td></td><td></td></tr>
              <tr><td><div class="tn l1"><span class="cb"><svg width="13" height="13"><use href="#ok"/></svg></span><svg width="14" height="14" viewBox="0 0 14 14"><path d="M2 1v10l10 2M2 11l8-7" fill="none" stroke="#555" stroke-width="1.100"/><path d="M2 1v3" stroke="#1a2ab8" stroke-width="1.500"/><path d="M10 13l3-1" stroke="#d01818" stroke-width="1.500"/><path d="M10 4l2-1" stroke="#1a9a5a" stroke-width="1.500"/></svg><span>基准坐标系 (0)</span></div></td><td><div class="col2"><svg width="13" height="13"><use href="#ok"/></svg></div></td><td></td></tr>
              <tr><td><div class="tn l1"><span class="cb"><svg width="13" height="13"><use href="#ok"/></svg></span><svg width="15" height="15" viewBox="0 0 15 15"><path d="M.5.500h14v14H.5z" fill="#fff" stroke="#1a8ae8" stroke-dasharray="2 1"/><path d="M5 3h3v3H5zM2 9h3v3H2zM9 9h3v3H9z" fill="#fff" stroke="#111"/><path d="M6.500 6v3M3.500 9V7.500h7V9" stroke="#111" fill="none"/><path d="M10 5l3-3" stroke="#e0a020" stroke-width="1.500"/></svg><span class="fw-bold">草图 (1) "SKET...</span></div></td><td><div class="col2"><svg width="13" height="13"><use href="#ok"/></svg></div></td><td></td></tr>
            </tbody>
          </table>
        </div>
        <svg class="tree-dots" width="200" height="200" viewBox="48 236 200 200"><path d="M58.500 279v60M77.500 357v37M77.500 369H88M77.500 393H88M64 296h5" fill="none" stroke="#999" stroke-dasharray="1 2"/></svg>
        <div class="hscroll d-flex">
          <span class="hs-arrow"><svg width="7" height="11" viewBox="0 0 7 11"><path d="M6 1 1.500 5.500 6 10" fill="none" stroke="#555" stroke-width="1.800"/></svg></span>
          <span class="hs-thumb"></span>
          <span class="hs-arrow ms-auto"><svg width="7" height="11" viewBox="0 0 7 11"><path d="M1 1l4.500 4.500L1 10" fill="none" stroke="#555" stroke-width="1.800"/></svg></span>
        </div>
      </div>
      <div class="sash"></div>
      <div class="acc d-flex align-items-center justify-content-between"><span>相关性</span><svg width="16" height="12"><use href="#chev-dn"/></svg></div>
      <div class="acc d-flex align-items-center justify-content-between"><span>细节</span><svg width="16" height="12"><use href="#chev-dn"/></svg></div>
      <div class="acc d-flex align-items-center justify-content-end"><svg width="16" height="12"><use href="#chev-dn"/></svg></div>
    </div>

    <div class="viewport flex-fill d-flex flex-column">
      <div class="vtabs d-flex">
        <div class="vtab vtab-b">
          <svg width="14" height="14" viewBox="0 0 14 14"><path d="M1 3l6-2 6 2v8l-6 2-6-2z" fill="#3f74d6"/><path d="M5 6h5v5H5z" fill="#fff"/></svg>
          <span>EX4.prt</span>
          <svg class="ms-1" width="10" height="11"><use href="#pin"/></svg>
        </div>
        <div class="vtab vtab-a">
          <svg width="15" height="15" viewBox="0 0 15 15"><path d="M1 1h4v4H1zM1 9h5v5H1zM9 9h5v5H9z" fill="none" stroke="#111" stroke-width="1.200"/><path d="M3 5v4M3 7h9v2" fill="none" stroke="#111"/><path d="M8 6l5-5" stroke="#f0b030" stroke-width="2"/></svg>
          <span>草图技巧.prt</span>
          <svg class="text-white" width="11" height="12"><use href="#pin"/></svg>
          <svg class="m3" width="9" height="9" viewBox="0 0 9 9"><path d="m1 1 7 7M8 1 1 8" stroke="#c6d6dc" stroke-width="2"/></svg>
        </div>
      </div>
      <div class="canvas flex-fill">
        <svg width="1414" height="826" viewBox="425 231 1414 826">
          <ellipse cx="1132" cy="643" rx="150" ry="74.500" fill="none" stroke="#f5a04a" stroke-width="2"/>
          <rect x="1090" y="602" width="84.500" height="82.500" fill="#a9b8c4" stroke="#0a9bef" stroke-width="2"/>
          <path d="M1134 575.500h65.500V640" fill="none" stroke="#8a80e8" stroke-width="1.200"/>
          <path d="M1132 525v27" stroke="#9a9ae8" stroke-width="2"/>
          <path d="M1132 510l-3 15h6z" fill="#0a0ae6"/>
          <text x="1132" y="507" text-anchor="middle" font-family="Liberation Sans" font-size="11" fill="#2a3ae0">Y</text>
          <text x="1132" y="556" text-anchor="middle" font-family="Liberation Sans" font-size="9" fill="#4a9a4a">Y</text>
          <path d="M1132 575v68" stroke="#6f8a3a" stroke-width="4"/>
          <path d="M1127.500 580l4.500-9 4.500 9z" fill="#1e8a3e"/>
          <path d="M1132 552l-4.500 18c3 2 6 2 9 0z" fill="#b9a76b"/>
          <path d="M1132 643h68" stroke="#8c4a66" stroke-width="2.500"/>
          <path d="M1194 637.500l15 5.500-15 5.500z" fill="#d8383c"/>
          <path d="M1209 643h23" stroke="#a6a9ba" stroke-width="2"/>
          <path d="M1218 638l8 10M1226 638l-8 10" stroke="#e25a5a"/>
          <circle cx="1233" cy="643" r="4" fill="#b39f63"/>
          <path d="M1237 643h43" stroke="#0a9bef" stroke-width="2"/>
          <path d="M1250 639l9 4-9 4z" fill="#1a5ae6"/>
          <path d="M1268 638l8 10M1276 638l-8 10" stroke="#1a3ae0"/>
          <circle cx="1281" cy="643" r="4" fill="#b39f63"/>
          <path d="M1284 638.500l15 4.500-15 4.500z" fill="#12b0f5"/>
          <path d="M1132 613l-6 9h3.500v11h5v-11h3.500zM1132 675l-6-10h3.500v-13h5v13h3.500zM1100 643l11-6v4h11v5h-11v4zM1161 643l-11-6v4h-11v5h11v4z" fill="#ee76a8"/>
          <circle cx="1132" cy="643" r="4" fill="#c01a9a"/>
          <path d="M1282 646l6.500 77" stroke="#b3a876" stroke-width="1.200"/>
          <!-- datum triad bottom left -->
          <path d="M491.500 962h26.500v26.500" fill="none" stroke="#b4b4b4" stroke-width="1.200"/>
          <path d="M491 953v35" stroke="#7aa67a" stroke-width="1.500"/>
          <path d="M491 945l-3 13h6z" fill="#1e8a3e"/>
          <path d="M491 988h32" stroke="#c89090" stroke-width="1.500"/>
          <path d="M536 988l-14-3v6z" fill="#e23a3a"/>
          <rect x="488" y="984.500" width="6" height="7" fill="#1a3ae0"/>
          <text x="491" y="942" text-anchor="middle" font-family="Liberation Sans" font-size="11" fill="#6aa66a">Y</text>
          <text x="541" y="993" text-anchor="middle" font-family="Liberation Sans" font-size="13" fill="#e26a6a">X</text>
        </svg>
      </div>
    </div>

    <span class="note note-a">大半径即长轴</span>
    <span class="note note-b">小半径即短轴</span>
    <span class="note note-c">角度是长轴与X轴的夹角</span>

    <div class="dimbox d-flex align-items-center">
      <span class="grip"></span>
      <span class="dim-l">大半径</span>
      <div class="dim-in d-flex align-items-center justify-content-between"><b>50</b><span class="tri lg"></span></div>
    </div>

    <!-- ellipse dialog -->
    <div class="dlg d-flex flex-column">
      <div class="dlg-h d-flex align-items-center">
        <svg width="13" height="13" viewBox="0 0 14 14"><circle cx="7" cy="7" r="4" fill="none" stroke="#fff" stroke-width="2.200"/><path d="M7 .5v2.500M7 11v2.500M.5 7H3M11 7h2.500M2.400 2.400l1.800 1.800M9.800 9.800l1.800 1.800M11.600 2.400 9.800 4.200M4.200 9.800l-1.800 1.800" stroke="#fff" stroke-width="1.800"/></svg>
        <span class="m10">椭圆</span>
        <svg class="ms-auto" width="13" height="13" viewBox="0 0 13 13"><path d="M3 2.500a5 5 0 1 1-1.500 3.500" fill="none" stroke="#fff" stroke-width="1.700"/><path d="M4.500.5v4H.5" fill="#fff"/></svg>
        <svg class="m9" width="12" height="12" viewBox="0 0 12 12"><path d="m1 1 10 10M11 1 1 11" stroke="#fff" stroke-width="2"/></svg>
      </div>

      <section class="sec fs1">
        <div class="sec-h d-flex align-items-center justify-content-between"><span>中心</span><svg width="16" height="12"><use href="#chev-up"/></svg></div>
        <div class="row-pick d-flex align-items-center">
          <div class="pick-l pick-y d-flex align-items-center"><svg width="13" height="13"><use href="#ok"/></svg><span>指定点</span></div>
          <button type="button" class="btn mini"><svg width="22" height="22"><use href="#pt"/></svg></button>
          <div class="split y d-flex"><span class="s1"><svg width="18" height="20" viewBox="0 0 18 20"><path d="M11 1 4 10h4l-6 8 11-10H9l5-7z" fill="#f5d73e" stroke="#777" stroke-width=".7"/><circle cx="14" cy="17" r="2" class="d"/></svg></span><span class="s2"><span class="tri"></span></span></div>
        </div>
      </section>

      <section class="sec fs2">
        <div class="sec-h d-flex align-items-center justify-content-between"><span>大半径</span><svg width="16" height="12"><use href="#chev-up"/></svg></div>
        <div class="row-pick d-flex align-items-center">
          <div class="pick-l d-flex align-items-center"><svg width="13" height="13"><use href="#ok"/></svg><span>指定点</span></div>
          <button type="button" class="btn mini"><svg width="22" height="22"><use href="#pt"/></svg></button>
          <div class="split d-flex"><span class="s1"><svg width="20" height="20"><use href="#gnd"/></svg></span><span class="s2"><span class="tri"></span></span></div>
        </div>
        <div class="row-val d-flex align-items-center justify-content-between">
          <span>大半径</span>
          <div class="val d-flex align-items-center"><input class="form-control flex-fill" value="50"><span class="u">mm</span><span class="tri lg"></span></div>
        </div>
      </section>

      <section class="sec fs2">
        <div class="sec-h d-flex align-items-center justify-content-between"><span>小半径</span><svg width="16" height="12"><use href="#chev-up"/></svg></div>
        <div class="row-pick d-flex align-items-center">
          <div class="pick-l d-flex align-items-center"><svg width="13" height="13"><use href="#ok"/></svg><span>指定点</span></div>
          <button type="button" class="btn mini"><svg width="22" height="22"><use href="#pt"/></svg></button>
          <div class="split d-flex"><span class="s1"><svg width="20" height="20"><use href="#gnd"/></svg></span><span class="s2"><span class="tri"></span></span></div>
        </div>
        <div class="row-val d-flex align-items-center justify-content-between">
          <span>小半径</span>
          <div class="val d-flex align-items-center"><input class="form-control flex-fill" value="25"><span class="u">mm</span><span class="tri lg"></span></div>
        </div>
      </section>

      <section class="sec fs4">
        <div class="sec-h d-flex align-items-center justify-content-between"><span>限制</span><svg width="16" height="12"><use href="#chev-up"/></svg></div>
        <div class="chk d-flex align-items-center">
          <span class="chk-box"><svg width="16" height="16" viewBox="0 0 16 16"><path d="M3 8l3.500 3.500L13 5" fill="none" stroke="#444" stroke-width="1.600"/></svg></span>
          <span>封闭</span>
        </div>
      </section>

      <section class="sec fs5">
        <div class="sec-h d-flex align-items-center justify-content-between"><span>旋转</span><svg width="16" height="12"><use href="#chev-up"/></svg></div>
        <div class="row-val d-flex align-items-center justify-content-between">
          <span>角度</span>
          <div class="val d-flex align-items-center"><input class="form-control flex-fill" value="0"><span class="u">°</span><span class="tri lg"></span></div>
        </div>
      </section>

      <section class="sec fs6">
        <div class="sec-h d-flex align-items-center justify-content-between h-100 pb-0"><span>预览</span><svg width="16" height="12"><use href="#chev-dn"/></svg></div>
      </section>

      <div class="dlg-f d-flex justify-content-end">
        <button type="button" class="btn btn-ok">&lt; 确定 &gt;</button>
        <button type="button" class="btn">应用</button>
        <button type="button" class="btn">取消</button>
      </div>
    </div>
  </div>

  <!-- status bar -->
  <div class="status d-flex align-items-center justify-content-between">
    <span>选择点以指定中心</span>
    <span class="d-flex align-items-center gap-2">
      <svg width="12" height="12" viewBox="0 0 14 14"><path d="M2 2q5-2 10 0v7q-5-2-10 0z" fill="url(#chk)" stroke="#333" stroke-width=".5"/><path d="M2 1v12" stroke="#222"/></svg>
      <svg width="12" height="12" viewBox="0 0 12 12"><path d="M.5.500h11v11H.5z" fill="#f4f4f4" stroke="#333"/><path d="M3 4h6v4H3z" fill="#777"/></svg>
    </span>
  </div>
</div>

<!-- input method floating bar -->
<div class="ime d-flex align-items-center">
  <span class="ime-sp"></span>
  <span class="ime-i">中</span>
  <span class="ime-i">°,</span>
  <span class="ime-i"><svg width="20" height="20" viewBox="0 0 20 20"><circle cx="10" cy="10" r="9" fill="#1f78c8"/><circle cx="7" cy="7.500" r="1.500" fill="#fff"/><circle cx="13" cy="7.500" r="1.500" fill="#fff"/><path d="M5 11h10c0 3-2 5-5 5s-5-2-5-5z" fill="#fff"/></svg></span>
  <span class="ime-i"><svg width="15" height="22" viewBox="0 0 15 22"><rect x="4" y="0" width="7" height="14" rx="3.500" fill="#1f78c8"/><path d="M1 9c0 9 13 9 13 0M7.500 16v4M3 21h9" fill="none" stroke="#1f78c8" stroke-width="1.600"/></svg></span>
  <span class="ime-i fs-5">Ω</span>
  <span class="ime-i"><svg width="19" height="17" viewBox="0 0 19 17"><rect x=".8" y=".8" width="17.400" height="15.400" rx="2" fill="#fff" stroke="#1f78c8" stroke-width="1.600"/><path d="M3 4.500h13M3 8h13M5 12h9M6 3v7M9.500 3v7M13 3v7" stroke="#1f78c8" stroke-width="1.500"/></svg></span>
  <span class="ime-i"><svg width="19" height="20" viewBox="0 0 19 20"><circle cx="8" cy="5" r="4.500" fill="#ccc"/><path d="M1 19v-5c0-3 3-4 7-4v9z" fill="#ccc"/><path d="M9 12h9v7H9z" fill="#fff" stroke="#ccc"/></svg></span>
  <span class="ime-i"><svg width="17" height="17" viewBox="0 0 17 17"><rect x="0" y="0" width="7.500" height="7.500" rx="2" fill="#1f78c8"/><rect x="9.500" y="0" width="7.500" height="7.500" rx="2" fill="none" stroke="#1f78c8" stroke-width="2"/><rect x="0" y="9.500" width="7.500" height="7.500" rx="2" fill="#1f78c8"/><rect x="9.500" y="9.500" width="7.500" height="7.500" rx="2" fill="#1f78c8"/></svg></span>
</div>
<div class="ime-s">S</div>

<script>
  // the navigator grid keeps going below the last node
  const rows = document.getElementById('rows');
  for (let i = 0; i < 24; i++) {
    rows.insertAdjacentHTML('beforeend', '<tr><td></td><td></td><td></td></tr>');
  }
</script>
</body>
</html>
